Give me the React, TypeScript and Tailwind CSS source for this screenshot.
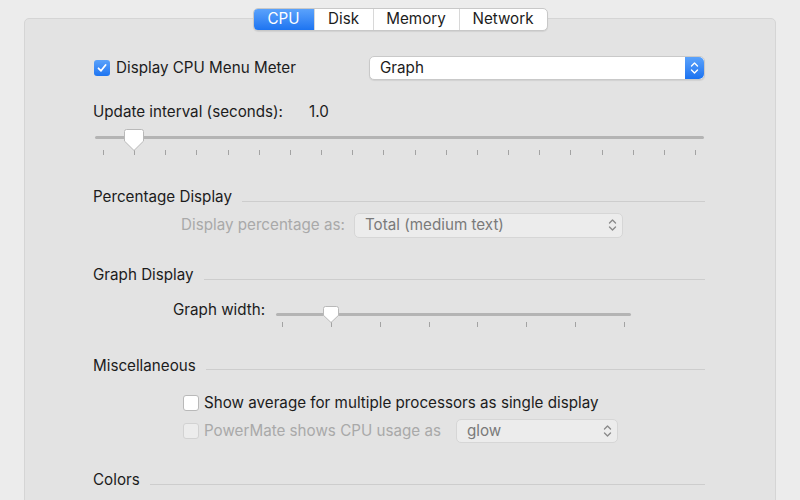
import React from "react";

const font = { fontFamily: "Inter, 'Liberation Sans', Arial, sans-serif" };

function Stepper({ blue }: { blue?: boolean }) {
  return (
    <div
      className={
        blue
          ? "flex h-full w-[19px] items-center justify-center rounded-r-[5px] bg-gradient-to-b from-[#5aa2fb] to-[#1a72f0]"
          : "flex h-full w-[19px] items-center justify-center"
      }
    >
      <svg width="9" height="14" viewBox="0 0 9 14" fill="none">
        <path d="M1.5 5 L4.5 2 L7.5 5" stroke={blue ? "#fff" : "#8a8a8a"} strokeWidth="1.4" strokeLinecap="round" strokeLinejoin="round" />
        <path d="M1.5 9 L4.5 12 L7.5 9" stroke={blue ? "#fff" : "#8a8a8a"} strokeWidth="1.4" strokeLinecap="round" strokeLinejoin="round" />
      </svg>
    </div>
  );
}

function Thumb({ w, h }: { w: number; h: number }) {
  return (
    <svg width={w} height={h} viewBox={`0 0 ${w} ${h}`}>
      <path
        d={`M2.5 0.5 H${w - 2.5} Q${w - 0.5} 0.5 ${w - 0.5} 2.5 V${h * 0.55} L${w / 2} ${h - 0.5} L0.5 ${h * 0.55} V2.5 Q0.5 0.5 2.5 0.5 Z`}
        fill="#ffffff"
        stroke="#b9b9b9"
        strokeWidth="1"
      />
    </svg>
  );
}

function Slider({ ticks, thumbAt, thumbW, thumbH, inset, gap }: { ticks: number; thumbAt: number; thumbW: number; thumbH: number; inset: number; gap: number }) {
  return (
    <div className="relative w-full">
      <div className="h-[3px] w-full rounded-full bg-[#b4b4b4]" />
      <div className="flex justify-between" style={{ paddingLeft: inset, paddingRight: inset, marginTop: gap }}>
        {Array.from({ length: ticks }).map((_, i) => (
          <div key={i} className="h-[5px] w-px bg-[#a3a3a3]" />
        ))}
      </div>
      <div className="absolute" style={{ left: thumbAt - thumbW / 2, top: -7 }}>
        <Thumb w={thumbW} h={thumbH} />
      </div>
    </div>
  );
}

function Header({ label }: { label: string }) {
  return (
    <div className="flex items-center gap-[10px] text-[#1c1c1c]">
      <span>{label}</span>
      <div className="mt-[8px] h-px flex-1 bg-[#cdcdcd]" />
    </div>
  );
}

export default function App() {
  return (
    <div className="h-[500px] w-[800px] overflow-hidden bg-[#ececec] pt-[8px] text-[15.2px]" style={font}>
      <div className="relative z-10 flex justify-center">
        <div className="flex h-[23px] overflow-hidden rounded-[5px] border border-[#c8c8c8] bg-white text-[#1c1c1c] shadow-[0_1px_1px_rgba(0,0,0,0.08)]">
          <div className="flex w-[60px] items-center justify-center bg-gradient-to-b from-[#5aa2fb] to-[#1c74f1] text-white">CPU</div>
          <div className="flex w-[59px] items-center justify-center border-l border-[#d8d8d8]">Disk</div>
          <div className="flex w-[86px] items-center justify-center border-l border-[#d8d8d8]">Memory</div>
          <div className="flex w-[88px] items-center justify-center border-l border-[#d8d8d8]">Network</div>
        </div>
      </div>

      <div className="mx-[24px] -mt-[13px] h-[490px] rounded-[5px] border border-[#d5d5d5] bg-[#e3e3e3] pl-[68px] pr-[70px] pt-[36px] text-[#1c1c1c]">
        <div className="flex h-[26px] items-center">
          <div className="flex w-[276px] items-center">
            <div className="ml-px flex h-[16px] w-[16px] items-center justify-center rounded-[3px] bg-gradient-to-b from-[#5aa2fb] to-[#1c74f1]">
              <svg width="12" height="12" viewBox="0 0 12 12" fill="none">
                <path d="M2.5 6.3 L5 8.8 L9.6 3" stroke="#fff" strokeWidth="1.8" strokeLinecap="round" strokeLinejoin="round" />
              </svg>
            </div>
            <span className="ml-[6px]">Display CPU Menu Meter</span>
          </div>
          <div className="flex h-[24px] w-[336px] items-center justify-between rounded-[5px] border border-[#c9c9c9] bg-white pl-[10px] shadow-[0_1px_1px_rgba(0,0,0,0.08)]">
            <span>Graph</span>
            <Stepper blue />
          </div>
        </div>

        <div className="mt-[21px] flex h-[20px] items-center">
          <span className="w-[216px]">Update interval (seconds):</span>
          <span>1.0</span>
        </div>

        <div className="ml-[2px] mt-[14px] w-[609px]">
          <Slider ticks={20} thumbAt={39} thumbW={20} thumbH={22} inset={8} gap={11} />
        </div>

        <div className="mt-[31px]">
          <Header label="Percentage Display" />
        </div>
        <div className="mt-[4px] flex h-[25px] items-center">
          <span className="ml-[88px] w-[173px] text-[#a9a9a9]">Display percentage as:</span>
          <div className="flex h-[25px] w-[269px] items-center justify-between rounded-[5px] border border-[#d6d6d6] bg-[#ececec] pl-[10px] text-[#7a7a7a]">
            <span>Total (medium text)</span>
            <Stepper />
          </div>
        </div>

        <div className="mt-[26px]">
          <Header label="Graph Display" />
        </div>
        <div className="mt-[13px] flex h-[20px] items-start">
          <span className="ml-[80px] w-[103px] leading-[20px]">Graph width:</span>
          <div className="mt-[13px] w-[355px]">
            <Slider ticks={8} thumbAt={55} thumbW={16} thumbH={17} inset={6} gap={6} />
          </div>
        </div>

        <div className="mt-[35px]">
          <Header label="Miscellaneous" />
        </div>
        <div className="mt-[16px] flex h-[20px] items-center">
          <div className="ml-[90px] h-[16px] w-[16px] rounded-[3px] border border-[#b9b9b9] bg-white" />
          <span className="ml-[5px]">Show average for multiple processors as single display</span>
        </div>
        <div className="mt-[6px] flex h-[24px] items-center">
          <div className="ml-[90px] h-[16px] w-[16px] rounded-[3px] border border-[#d2d2d2] bg-[#ececec]" />
          <span className="ml-[5px] w-[252px] text-[#a9a9a9]">PowerMate shows CPU usage as</span>
          <div className="flex h-[24px] w-[162px] items-center justify-between rounded-[5px] border border-[#d6d6d6] bg-[#ececec] pl-[10px] text-[#7a7a7a]">
            <span>glow</span>
            <Stepper />
          </div>
        </div>

        <div className="mt-[26px]">
          <Header label="Colors" />
        </div>
      </div>
    </div>
  );
}
